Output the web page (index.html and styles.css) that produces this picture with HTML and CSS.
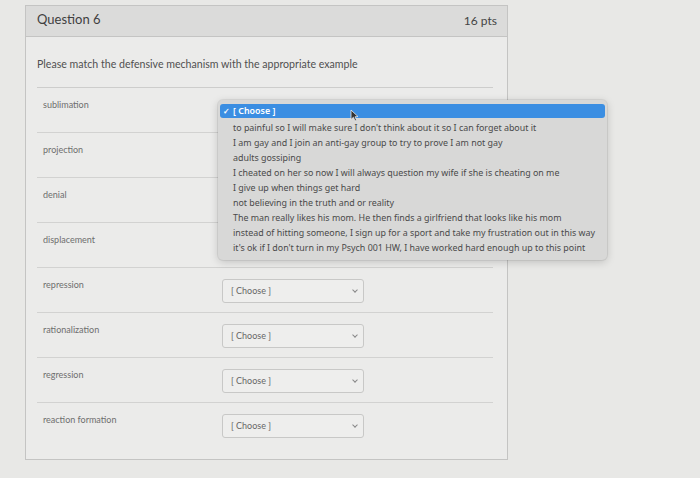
FILE: index.html
```html
<!DOCTYPE html>
<html lang="en">
<head>
    <meta charset="UTF-8">
    <title>Question 6</title>
    <link rel="stylesheet" href="styles.css">
</head>
<body>
    <div class="page">
        <div class="quiz">
            <div class="q-head">
                <span class="q-title">Question 6</span>
                <span class="q-pts">16 pts</span>
            </div>
            <div class="q-body">
                <p class="q-text">Please match the defensive mechanism with the appropriate example</p>
                <div class="matches">
                    <!-- first four selects sit under the open menu -->
                    <div class="match"><span class="match-label">sublimation</span><div class="select covered"></div></div>
                    <div class="match"><span class="match-label">projection</span><div class="select covered"></div></div>
                    <div class="match"><span class="match-label">denial</span><div class="select covered"></div></div>
                    <div class="match"><span class="match-label">displacement</span><div class="select covered"></div></div>
                    <div class="match"><span class="match-label">repression</span><div class="select">[ Choose ]<span class="chev"></span></div></div>
                    <div class="match"><span class="match-label">rationalization</span><div class="select">[ Choose ]<span class="chev"></span></div></div>
                    <div class="match"><span class="match-label">regression</span><div class="select">[ Choose ]<span class="chev"></span></div></div>
                    <div class="match last"><span class="match-label">reaction formation</span><div class="select">[ Choose ]<span class="chev"></span></div></div>
                </div>
            </div>
        </div>

        <!-- open native select menu of the first row -->
        <div class="dropdown">
            <div class="opt selected"><span class="tick">✓</span>[ Choose ]</div>
            <div class="opt">to painful so I will make sure I don't think about it so I can forget about it</div>
            <div class="opt">I am gay and I join an anti-gay group to try to prove I am not gay</div>
            <div class="opt">adults gossiping</div>
            <div class="opt">I cheated on her so now I will always question my wife if she is cheating on me</div>
            <div class="opt">I give up when things get hard</div>
            <div class="opt">not believing in the truth and or reality</div>
            <div class="opt">The man really likes his mom. He then finds a girlfriend that looks like his mom</div>
            <div class="opt">instead of hitting someone, I sign up for a sport and take my frustration out in this way</div>
            <div class="opt">it's ok if I don't turn in my Psych 001 HW, I have worked hard enough up to this point</div>
        </div>

        <svg class="cursor" width="9" height="13" viewBox="0 0 9 13">
            <path d="M1 1 L1 10.5 L3.4 8.3 L5 12 L6.6 11.3 L5 7.8 L8 7.6 Z" fill="#333" stroke="#eee" stroke-width="0.8"/>
        </svg>
    </div>
</body>
</html>
```

FILE: styles.css
```css
* {
    margin: 0;
    padding: 0;
    box-sizing: border-box;
}

body {
    font-family: Lato, 'Liberation Sans', sans-serif;
    background: #e8e8e6;
    width: 700px;
    height: 478px;
    overflow: hidden;
}

.page {
    position: relative;
    height: 478px;
    padding: 5px 0 0 25px;
}

.quiz {
    width: 483px;
    height: 455px;
    border: 1px solid #c4c4c3;
    background: #ebebea;
}

.q-head {
    height: 31px;
    background: #dbdbda;
    border-bottom: 1px solid #c4c4c3;
    display: flex;
    align-items: center;
    justify-content: space-between;
    padding: 0 10px 1px 11px;
}

.q-title {
    font-size: 13px;
    color: #3f3f3f;
    margin-bottom: 3px;
}

.q-pts {
    font-size: 12px;
    color: #444;
}

.q-body {
    padding: 0 14px 0 11px;
}

.q-text {
    font-size: 10.6px;
    line-height: 13px;
    color: #505050;
    padding: 21px 0 16px;
    border-bottom: 1px solid #cdcdcc;
}

.match {
    height: 45px;
    display: flex;
    align-items: flex-start;
    padding-top: 11px;
    border-bottom: 1px solid #d2d2d1;
}

.match.last {
    border-bottom: none;
}

.match-label {
    width: 185px;
    padding: 0 0 0 6px;
    font-size: 9px;
    line-height: 12px;
    color: #6e6e6e;
}

.select {
    position: relative;
    width: 142px;
    height: 24px;
    border: 1px solid #c8c8c7;
    border-radius: 3px;
    background: #eeeeed;
    font-size: 9px;
    line-height: 22px;
    color: #666;
    padding-left: 8px;
}

.select.covered {
    visibility: hidden;
}

.chev {
    position: absolute;
    right: 6px;
    top: 8px;
    width: 4px;
    height: 4px;
    border-right: 1px solid #888;
    border-bottom: 1px solid #888;
    transform: rotate(45deg);
}

.dropdown {
    position: absolute;
    left: 218px;
    top: 100px;
    width: 389px;
    padding: 4px 2px 5px;
    background: #d8d8d7;
    border-radius: 5px;
    box-shadow: 0 2px 8px rgba(0, 0, 0, 0.18), 0 0 0 1px rgba(0, 0, 0, 0.06);
    font-family: 'Noto Sans', sans-serif;
    font-size: 8.9px;
    color: #4a4a4a;
}

.opt {
    height: 15px;
    line-height: 15px;
    padding-left: 13px;
    white-space: nowrap;
}

.opt.selected {
    height: 14px;
    line-height: 14px;
    margin-bottom: 2px;
    background: #3b8ee2;
    border-radius: 3px;
    color: #fff;
    font-weight: 600;
    padding-left: 3px;
}

.tick {
    display: inline-block;
    width: 10px;
    font-size: 8px;
}

.cursor {
    position: absolute;
    left: 350px;
    top: 109px;
}
```
